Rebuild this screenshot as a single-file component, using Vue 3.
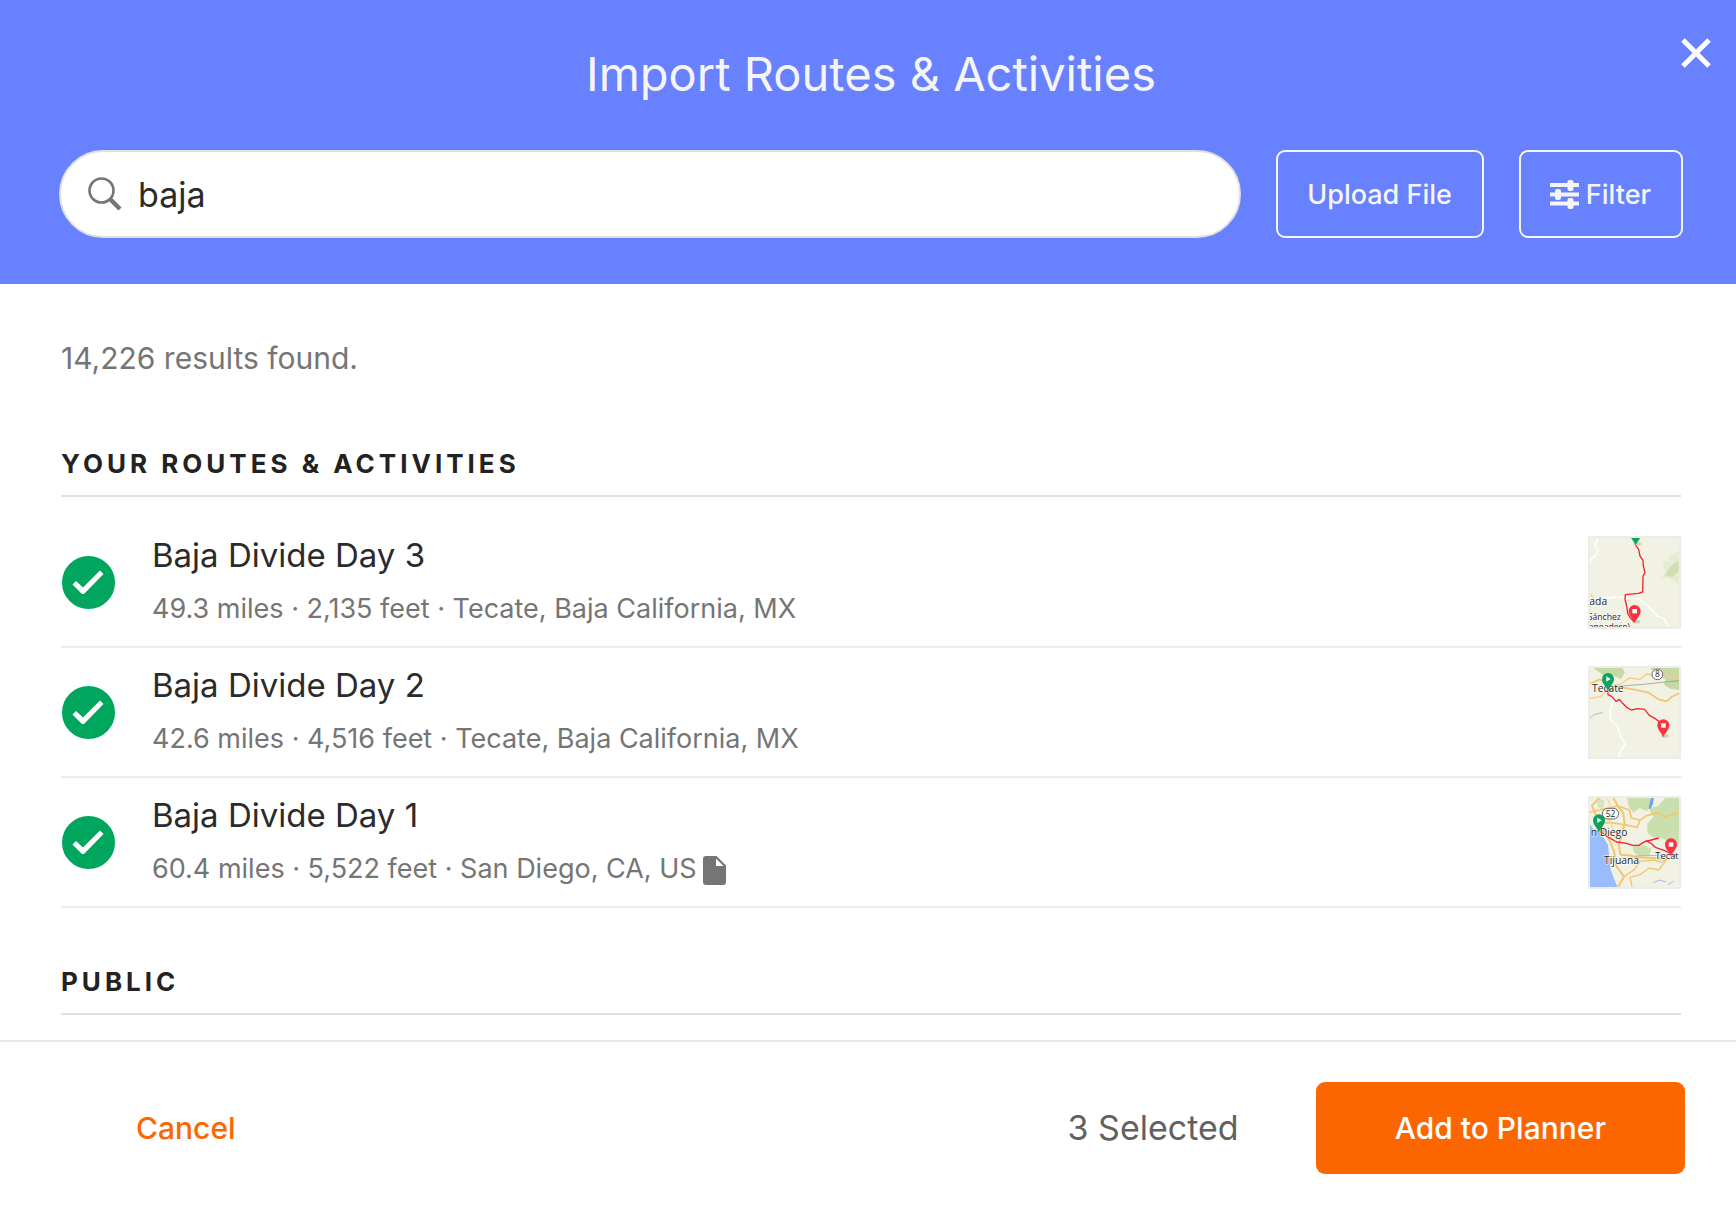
<template>
  <div class="import-dialog">
    <header class="dialog-header">
      <button class="close-button" type="button" aria-label="Close">
        <svg viewBox="0 0 30 30" width="30" height="30" aria-hidden="true">
          <path d="M2 2L28 28M28 2L2 28" fill="none" stroke="#fff" stroke-width="5" />
        </svg>
      </button>
      <h1>Import Routes &amp; Activities</h1>
      <div class="toolbar">
        <label class="search">
          <svg viewBox="0 0 34 34" width="34" height="34" aria-hidden="true">
            <circle cx="13.500" cy="13.500" r="12" fill="none" stroke="#757575" stroke-width="2.600" />
            <path d="M21.500 21.500L32 32" fill="none" stroke="#757575" stroke-width="4.400" />
          </svg>
          <input v-model="query" type="text" aria-label="Search routes" />
        </label>
        <button class="outline-button" type="button">Upload File</button>
        <button class="outline-button" type="button">
          <svg viewBox="0 0 29 29" width="29" height="29" aria-hidden="true">
            <g fill="#f5f5f7">
              <path d="M0 3h29v4H0zM0 12.500h29v4H0zM0 21.500h29v4H0z" />
              <rect x="17.500" y="0" width="6" height="11" rx="2" />
              <rect x="5" y="9" width="6" height="11" rx="2" />
              <rect x="17.500" y="18" width="6" height="11" rx="2" />
            </g>
          </svg>
          Filter
        </button>
      </div>
    </header>

    <main class="results">
      <p class="result-count">14,226 results found.</p>

      <h2>Your Routes &amp; Activities</h2>
      <ul class="route-list">
        <li v-for="route in routes" :key="route.id" class="route">
          <span class="check">
            <input :id="'route-' + route.id" v-model="route.selected" type="checkbox" />
            <svg v-if="route.selected" viewBox="0 0 53 53" aria-hidden="true">
              <path d="M10.500 28.500L14 25L21 31.500L38 14.500L41.500 18L22 38H20z" fill="#fff" />
            </svg>
          </span>
          <label class="route-text" :for="'route-' + route.id">
            <span class="route-name">{{ route.name }}</span>
            <span class="route-meta">
              {{ route.meta }}
              <svg v-if="route.hasFile" viewBox="0 0 23 29" width="23" height="29" aria-hidden="true">
                <path
                  d="M3 0H13.500L23 9.500V26a3 3 0 0 1-3 3H3a3 3 0 0 1-3-3V3a3 3 0 0 1 3-3zM13 2.500V10h7.500z"
                  fill="#757575"
                  fill-rule="evenodd"
                />
              </svg>
            </span>
          </label>
          <svg class="route-map" viewBox="0 0 267 267" role="img" :aria-label="route.name + ' map'">
            <rect width="267" height="267" fill="#f1f2e4" />
            <path
              v-for="(shape, i) in route.map.areas"
              :key="'a' + i"
              :d="shape.d"
              :fill="shape.color"
            />
            <path
              v-for="(road, i) in route.map.roads"
              :key="'r' + i"
              :d="road.d"
              :stroke="road.color"
              :stroke-width="road.width"
              fill="none"
              stroke-linejoin="round"
            />
            <g v-if="route.map.shield">
              <rect
                :x="route.map.shield.x"
                :y="route.map.shield.y"
                :width="route.map.shield.width"
                height="32"
                rx="16"
                fill="#fff"
                stroke="#666"
                stroke-width="3"
              />
              <text
                :x="route.map.shield.x + route.map.shield.width / 2"
                :y="route.map.shield.y + 25"
                text-anchor="middle"
                font-size="25"
              >{{ route.map.shield.text }}</text>
            </g>
            <path
              v-for="(line, i) in route.map.tracks"
              :key="'t' + i"
              :d="line"
              fill="none"
              stroke="#f5232b"
              stroke-width="4"
              stroke-linejoin="round"
            />
            <text
              v-for="label in route.map.labels"
              :key="label.text"
              class="place"
              :x="label.x"
              :y="label.y"
              :font-size="label.size"
            >{{ label.text }}</text>
            <g
              v-for="pin in route.map.pins"
              :key="pin.kind"
              :transform="`translate(${pin.x} ${pin.y})`"
            >
              <ellipse cx="5" cy="-4" rx="12" ry="5" fill="#000" opacity="0.150" />
              <path
                d="M0 0C-4 -12 -18 -22 -18 -36A18 18 0 0 1 18 -36C18 -22 4 -12 0 0z"
                :fill="pin.kind === 'start' ? '#0ca35f' : '#fb3340'"
              />
              <path v-if="pin.kind === 'start'" d="M-5 -44L8 -36L-5 -28z" fill="#fff" />
              <rect v-else x="-7" y="-42" width="14" height="13" fill="#fff" />
            </g>
          </svg>
        </li>
      </ul>

      <h2>Public</h2>
    </main>

    <footer class="dialog-footer">
      <button class="cancel-button" type="button">Cancel</button>
      <span class="selected-count">{{ selectedCount }} Selected</span>
      <button class="add-button" type="button">Add to Planner</button>
    </footer>
  </div>
</template>

<script setup>
import { computed, ref } from "vue";

const query = ref("baja");

const routes = ref([
  {
    id: 3,
    name: "Baja Divide Day 3",
    meta: "49.3 miles · 2,135 feet · Tecate, Baja California, MX",
    selected: true,
    map: {
      areas: [
        { d: "M240 50L267 38V140L250 128L228 118L214 120L226 98L216 82L224 66L240 70z", color: "#e6ebd3" },
        { d: "M226 112L240 88L256 72L266 70V100L246 118z", color: "#cfdfb4" },
      ],
      roads: [
        { d: "M24 0L14 22L26 36L16 54L4 62L0 76", color: "#fff", width: 4 },
        { d: "M0 182L30 178L60 180L84 176L106 180L146 182L164 196L186 216L204 236L222 242L236 267", color: "#fff", width: 4 },
        { d: "M0 168L10 180", color: "#f7cf8a", width: 4 },
      ],
      tracks: [
        "M137 22L146 34L150 54L159 67L160 84L165 104L159 114L158 162L145 166L106 170L105 184L110 204L113 226L121 239L134 252",
      ],
      labels: [
        { text: "ada", x: -2, y: 200, size: 31 },
        { text: "Sánchez", x: -7, y: 246, size: 26 },
        { text: "aneadero)", x: -4, y: 276, size: 26 },
      ],
      pins: [
        { kind: "start", x: 137, y: 22 },
        { kind: "end", x: 134, y: 255 },
      ],
    },
  },
  {
    id: 2,
    name: "Baja Divide Day 2",
    meta: "42.6 miles · 4,516 feet · Tecate, Baja California, MX",
    selected: true,
    map: {
      areas: [
        { d: "M10 0H98L104 14L92 34L66 20L40 22L24 10z", color: "#c5d9a6" },
        { d: "M180 0H267V66L240 62L222 50L226 34L200 22z", color: "#c5d9a6" },
      ],
      roads: [
        { d: "M0 150L12 140L38 134", color: "#9dbde0", width: 3 },
        { d: "M70 96L60 130L62 158L84 176L92 206L106 228L92 246L86 267", color: "#fff", width: 4 },
        { d: "M64 56L150 50L267 38", color: "#8b8b86", width: 2 },
        { d: "M0 48L30 34L60 56L96 58L140 66L176 74L206 94L230 100L246 86L267 76", color: "#f3c36b", width: 5 },
        { d: "M60 56L96 46L118 30L150 34L170 18L200 24L222 8L240 28L267 24", color: "#f6cd83", width: 4 },
        { d: "M0 92L30 86L54 66", color: "#f6cd83", width: 4 },
      ],
      tracks: [
        "M53 66L54 80L66 86L78 100L88 94L98 106L110 118L124 126L144 122L164 124L178 142L196 152L206 160L220 190",
      ],
      shield: { text: "8", x: 186, y: 3, width: 32 },
      labels: [{ text: "Tecate", x: 6, y: 73, size: 31 }],
      pins: [
        { kind: "start", x: 54, y: 69 },
        { kind: "end", x: 220, y: 208 },
      ],
    },
  },
  {
    id: 1,
    name: "Baja Divide Day 1",
    meta: "60.4 miles · 5,522 feet · San Diego, CA, US",
    hasFile: true,
    selected: true,
    map: {
      areas: [
        { d: "M0 80L10 92L22 96L40 118L54 140L58 180L62 216L82 267H0z", color: "#99bdfc" },
        { d: "M112 0H180L186 20L170 40L150 30L130 44L116 26z", color: "#c9dfae" },
        { d: "M172 78L190 56L176 30L204 24L226 0H267V136L240 130L214 120L196 122L172 104z", color: "#c9dfae" },
        { d: "M128 146L160 140L184 152L178 172L150 174L132 164z", color: "#c9dfae" },
        { d: "M22 0L44 6L38 36L22 26z", color: "#d6e6bd" },
        { d: "M182 0H192L188 20L180 34L176 30z", color: "#6fa3ec" },
      ],
      roads: [
        { d: "M28 0L6 22L16 48L28 76L44 96L60 130L72 160L80 206L102 236L84 267", color: "#f4c66e", width: 6 },
        { d: "M70 0L84 24L100 46L104 78L96 110L86 142L92 170L118 172L140 178L232 182", color: "#f4c66e", width: 6 },
        { d: "M0 42L30 36L56 30L84 24L118 36L124 60L150 66L172 52L204 44L224 56L267 44", color: "#f4c66e", width: 5 },
        { d: "M20 78L60 74L104 80L142 88L150 66", color: "#f4c66e", width: 5 },
        { d: "M52 0L60 20L50 56L66 84L76 122", color: "#f8dba0", width: 5 },
        { d: "M102 236L134 214L150 190L190 186L216 192L232 182L206 216L178 210L150 230L120 238L126 267", color: "#f4c66e", width: 4 },
        { d: "M136 174L200 172L250 168", color: "#9b9b96", width: 2 },
        { d: "M190 254L210 246L228 252M234 260L250 250", color: "#9dbde0", width: 3 },
      ],
      tracks: [
        "M32 100L52 116L80 132L110 136L128 142L146 142L166 130L184 126L206 120",
        "M168 128L186 138L196 148L224 158L244 168",
      ],
      shield: { text: "52", x: 37, y: 31, width: 49 },
      labels: [
        { text: "n Diego", x: 2, y: 115, size: 31 },
        { text: "Tijuana", x: 42, y: 197, size: 31 },
        { text: "Tecat", x: 196, y: 182, size: 28 },
      ],
      pins: [
        { kind: "start", x: 27, y: 103 },
        { kind: "end", x: 243, y: 175 },
      ],
    },
  },
]);

const selectedCount = computed(() => routes.value.filter((route) => route.selected).length);
</script>

<style>
body {
  margin: 0;
  background: #fff;
}
</style>

<style scoped>
.import-dialog {
  display: flex;
  flex-direction: column;
  min-height: 100vh;
  font-family: Inter, "Liberation Sans", sans-serif;
  color: #2b2b2b;
}

.dialog-header {
  position: relative;
  padding: 46px 53px 46px 59px;
  background: #6881ff;
}

h1 {
  margin: 0 0 48px;
  font-size: 47px;
  font-weight: 400;
  line-height: 56px;
  text-align: center;
  color: #f5f5f7;
}

button {
  font-family: inherit;
  cursor: pointer;
}

.close-button {
  position: absolute;
  top: 38px;
  right: 25px;
  display: flex;
  padding: 0;
  border: 0;
  background: none;
}

.toolbar {
  display: flex;
  gap: 35px;
}

.search {
  display: flex;
  flex: 1;
  align-items: center;
  gap: 16px;
  height: 84px;
  padding: 0 27px;
  border: 2px solid #e0e0e0;
  border-radius: 44px;
  background: #fff;
}

.search input {
  flex: 1;
  min-width: 0;
  padding: 0;
  border: 0;
  outline: 0;
  font-family: inherit;
  font-size: 34px;
  color: #2b2b2b;
}

.outline-button {
  display: flex;
  align-items: center;
  gap: 7px;
  padding: 0 30px 0 29px;
  border: 2px solid #f5f5f7;
  border-radius: 9px;
  background: none;
  font-size: 27px;
  font-weight: 500;
  color: #f5f5f7;
}

.results {
  flex: 1;
  padding: 55px 55px 0 61px;
}

.result-count {
  margin: 0 0 70px;
  font-size: 30px;
  line-height: 38px;
  color: #757575;
}

h2 {
  margin: 0;
  padding-bottom: 14px;
  border-bottom: 2px solid #e0e0e0;
  font-size: 26px;
  font-weight: 700;
  line-height: 34px;
  letter-spacing: 4px;
  text-transform: uppercase;
  color: #222;
}

.route-list {
  margin: 21px 0 57px;
  padding: 0;
  list-style: none;
}

.route {
  display: flex;
  align-items: center;
  height: 128px;
  border-bottom: 2px solid #ededed;
}

.check {
  display: grid;
  width: 53px;
  margin: 0 37px 0 1px;
}

.check > * {
  grid-area: 1 / 1;
}

.check input {
  width: 53px;
  height: 53px;
  margin: 0;
  border: 2px solid #bdbdbd;
  border-radius: 50%;
  appearance: none;
}

.check input:checked {
  border-color: #00a65e;
  background: #00a65e;
}

.check svg {
  pointer-events: none;
}

.route-text {
  flex: 1;
}

.route-name,
.route-meta {
  display: flex;
  align-items: center;
}

.route-name {
  margin-bottom: 11px;
  font-size: 33px;
  line-height: 42px;
}

.route-meta {
  gap: 6px;
  font-size: 27px;
  line-height: 44px;
  color: #757575;
}

.route-meta svg {
  margin-top: 4px;
}

.route-map {
  width: 89px;
  height: 89px;
  border: 2px solid #ececec;
  font-family: "Open Sans", "Noto Sans", sans-serif;
  font-weight: 500;
}

.route-map text {
  fill: #222;
}

.route-map .place {
  stroke: #fff;
  stroke-width: 3px;
  paint-order: stroke;
}

.dialog-footer {
  display: flex;
  align-items: center;
  padding: 40px 51px 38px 136px;
  border-top: 2px solid #e8e8e8;
}

.cancel-button {
  margin-right: auto;
  padding: 0;
  border: 0;
  background: none;
  font-size: 30px;
  font-weight: 500;
  color: #fc6600;
}

.selected-count {
  margin-right: 77px;
  padding-bottom: 2px;
  font-size: 34px;
  color: #616161;
}

.add-button {
  height: 92px;
  padding: 0 79px;
  border: 0;
  border-radius: 9px;
  background: #fc6600;
  font-size: 30px;
  font-weight: 500;
  color: #fff;
}
</style>
